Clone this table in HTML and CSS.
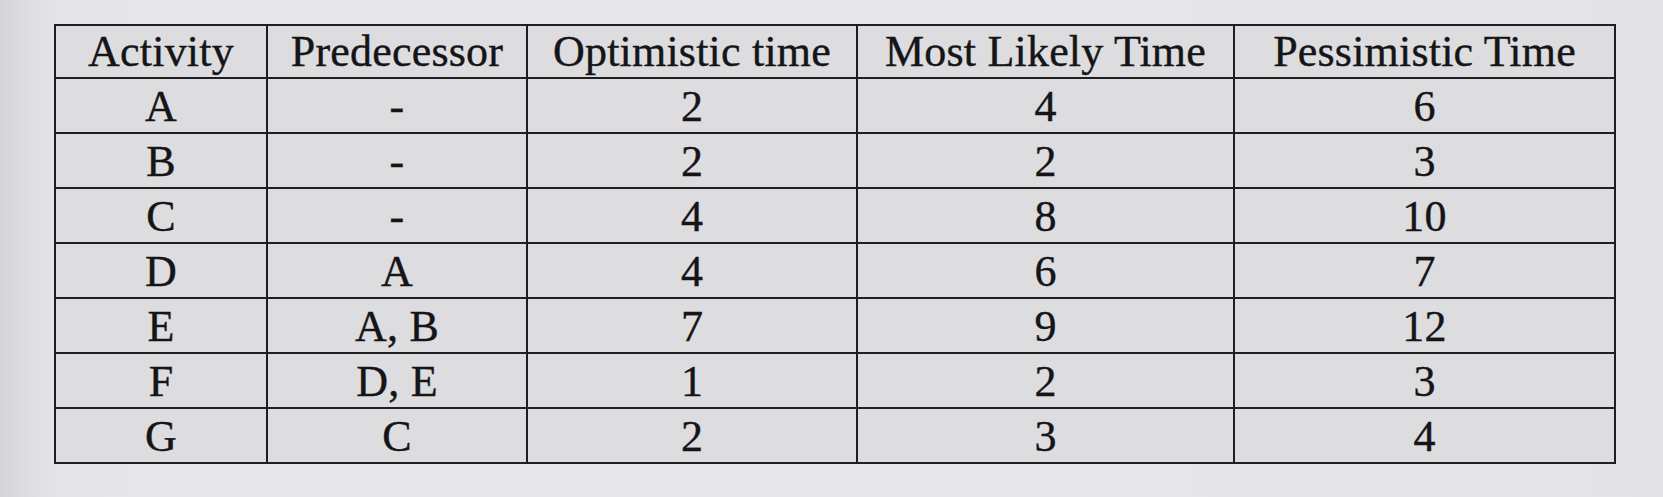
FILE: index.html
```html
<!DOCTYPE html>
<html lang="en">
<head>
<meta charset="utf-8">
<title>Activity table</title>
<link rel="stylesheet" href="styles.css">
</head>
<body>
<main class="page">
  <table class="pert">
    <colgroup>
      <col class="c1"><col class="c2"><col class="c3"><col class="c4"><col class="c5">
    </colgroup>
    <thead>
      <tr><th>Activity</th><th>Predecessor</th><th>Optimistic time</th><th>Most Likely Time</th><th>Pessimistic Time</th></tr>
    </thead>
    <tbody>
      <tr><td>A</td><td>-</td><td>2</td><td>4</td><td>6</td></tr>
      <tr><td>B</td><td>-</td><td>2</td><td>2</td><td>3</td></tr>
      <tr><td>C</td><td>-</td><td>4</td><td>8</td><td>10</td></tr>
      <tr><td>D</td><td>A</td><td>4</td><td>6</td><td>7</td></tr>
      <tr><td>E</td><td>A, B</td><td>7</td><td>9</td><td>12</td></tr>
      <tr><td>F</td><td>D, E</td><td>1</td><td>2</td><td>3</td></tr>
      <tr><td>G</td><td>C</td><td>2</td><td>3</td><td>4</td></tr>
    </tbody>
  </table>
</main>
</body>
</html>
```

FILE: styles.css
```css
html, body {
  margin: 0;
  padding: 0;
}
body {
  width: 1663px;
  height: 497px;
  overflow: hidden;
  background: linear-gradient(90deg, #d4d4d8 0px, #dfdfe2 30px, #e6e6e9 60px, #e8e8ea 800px, #e4e4e7 1663px);
  font-family: "Liberation Serif", "Times New Roman", serif;
  color: #151517;
}
.page {
  padding: 24px 0 0 54px;
}
.pert {
  border-collapse: collapse;
  table-layout: fixed;
  width: 1560px;
  background: #dddde0;
}
.c1 { width: 212px; }
.c2 { width: 260px; }
.c3 { width: 330px; }
.c4 { width: 377px; }
.c5 { width: 381px; }
.pert th,
.pert td {
  border: 2px solid #1f1f22;
  padding: 0;
  text-align: center;
  vertical-align: middle;
  font-size: 44px;
  font-weight: normal;
  letter-spacing: 0.2px;
  line-height: 1;
  height: 51px;
  -webkit-text-stroke: 0.4px #151517;
}
.pert thead th {
  height: 51px;
}
.pert tbody td {
  padding-top: 2px;
}
```
